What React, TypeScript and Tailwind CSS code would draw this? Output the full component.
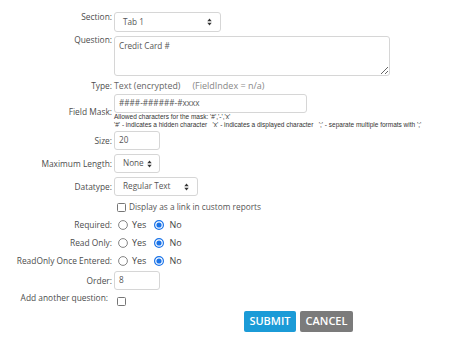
import React from "react";

function Arrows() {
  return (
    <svg width="5" height="8" viewBox="0 0 5 8" className="shrink-0">
      <path d="M0.3 3.2 L2.5 0.6 L4.7 3.2 Z" fill="#333" />
      <path d="M0.3 4.8 L2.5 7.4 L4.7 4.8 Z" fill="#333" />
    </svg>
  );
}

function Radio({ checked }: { checked?: boolean }) {
  return checked ? (
    <svg width="10" height="10" viewBox="0 0 10 10" className="shrink-0">
      <circle cx="5" cy="5" r="4.4" fill="#fff" stroke="#1a73e8" strokeWidth="1.2" />
      <circle cx="5" cy="5" r="2.6" fill="#1a73e8" />
    </svg>
  ) : (
    <svg width="10" height="10" viewBox="0 0 10 10" className="shrink-0">
      <circle cx="5" cy="5" r="4.4" fill="#fff" stroke="#767676" strokeWidth="0.9" />
    </svg>
  );
}

function Check() {
  return <div className="w-[9px] h-[9px] shrink-0 rounded-[1.5px] border border-[#767676] bg-white" />;
}

function Label({ children, className = "" }: { children: React.ReactNode; className?: string }) {
  return (
    <div className={`w-[112px] shrink-0 text-right text-[#4d4d4d] text-[8.4px] leading-[12px] ${className}`}>
      {children}
    </div>
  );
}

function YesNo() {
  return (
    <div className="flex items-center text-[#444] text-[9px]">
      <div className="ml-[4px]"><Radio /></div>
      <span className="ml-[4px]">Yes</span>
      <div className="ml-[8px]"><Radio checked /></div>
      <span className="ml-[5px]">No</span>
    </div>
  );
}

const field = "h-[19px] rounded-[3px] border border-[#d6d6d6] bg-white flex items-center text-[#555] text-[8.2px]";
const help = "font-['Liberation_Sans',Arial,sans-serif] text-[#333] text-[6.5px] leading-[8px] whitespace-pre";

export default function App() {
  return (
    <div className="w-[474px] h-[345px] bg-white font-['Open_Sans',sans-serif] pt-[12px]">
      {/* Section */}
      <div className="flex gap-[2px] h-[20px]">
        <Label className="mt-[-1px]">Section:</Label>
        <div className={`${field} h-[20px] w-[107px] pl-[8px] pr-[8px] justify-between`}>
          <span>Tab 1</span>
          <Arrows />
        </div>
      </div>
      {/* Question */}
      <div className="flex gap-[2px] mt-[4px]">
        <Label className="mt-[-2px]">Question:</Label>
        <textarea
          readOnly
          defaultValue="Credit Card #"
          className="w-[276px] h-[40px] rounded-[3px] border border-[#d6d6d6] bg-white text-[#555] text-[8.2px] leading-[12px] px-[4px] pt-[3px] outline-none resize"
        />
      </div>
      {/* Type */}
      <div className="flex gap-[2px] mt-[4px] h-[12px] items-center">
        <Label>Type:</Label>
        <span className="text-[#666] text-[8.8px] leading-[12px]">Text (encrypted)</span>
        <span className="ml-[10px] text-[#888] text-[9px] leading-[12px]">(FieldIndex = n/a)</span>
      </div>
      {/* Field Mask */}
      <div className="flex gap-[2px] mt-[2px] items-center">
        <Label>Field Mask:</Label>
        <div className="flex flex-col">
          <div className={`${field} w-[193px] pl-[4px]`}>####-######-#xxxx</div>
          <div className={help}>{"Allowed characters for the mask: '#','-','x'"}</div>
          <div className={help}>
            {"'#' - indicates a hidden character   'x' - indicates a displayed character   ';' - separate multiple formats with ';'"}
          </div>
        </div>
      </div>
      {/* Size */}
      <div className="flex gap-[2px] mt-[2px] items-center">
        <Label>Size:</Label>
        <div className={`${field} w-[46px] pl-[4px]`}>20</div>
      </div>
      {/* Max length */}
      <div className="flex gap-[2px] mt-[4px] items-center">
        <Label>Maximum Length:</Label>
        <div className={`${field} w-[46px] pl-[8px] pr-[7px] justify-between`}>
          <span>None</span>
          <Arrows />
        </div>
      </div>
      {/* Datatype */}
      <div className="flex gap-[2px] mt-[4px] items-center">
        <Label>Datatype:</Label>
        <div className={`${field} w-[84px] pl-[8px] pr-[8px] justify-between`}>
          <span>Regular Text</span>
          <Arrows />
        </div>
      </div>
      {/* Display as link */}
      <div className="flex gap-[2px] mt-[4px] h-[14px] items-center">
        <div className="w-[112px] shrink-0" />
        <div className="flex items-center ml-[3px]">
          <Check />
          <span className="ml-[3px] text-[#555] text-[8.3px]">Display as a link in custom reports</span>
        </div>
      </div>
      {/* Required */}
      <div className="flex gap-[2px] mt-[2px] h-[18px] items-center">
        <Label>Required:</Label>
        <YesNo />
      </div>
      <div className="flex gap-[2px] h-[18px] items-center">
        <Label>Read Only:</Label>
        <YesNo />
      </div>
      <div className="flex gap-[2px] h-[18px] items-center">
        <Label>ReadOnly Once Entered:</Label>
        <YesNo />
      </div>
      {/* Order */}
      <div className="flex gap-[2px] mt-[1px] items-center">
        <Label>Order:</Label>
        <div className={`${field} w-[46px] pl-[4px]`}>8</div>
      </div>
      {/* Add another */}
      <div className="flex gap-[2px] mt-[2px] items-start">
        <Label className="pr-[4px]">Add another question:</Label>
        <div className="ml-[3px] mt-[5px]"><Check /></div>
      </div>
      {/* Buttons */}
      <div className="flex gap-[4px] mt-[5px] ml-[244px]">
        <div className="w-[52px] h-[21px] rounded-[2px] bg-[#1b9bd7] text-white text-[11px] font-semibold flex items-center justify-center">SUBMIT</div>
        <div className="w-[53px] h-[21px] rounded-[2px] bg-[#7b7b7b] text-white text-[11px] font-semibold flex items-center justify-center">CANCEL</div>
      </div>
    </div>
  );
}
